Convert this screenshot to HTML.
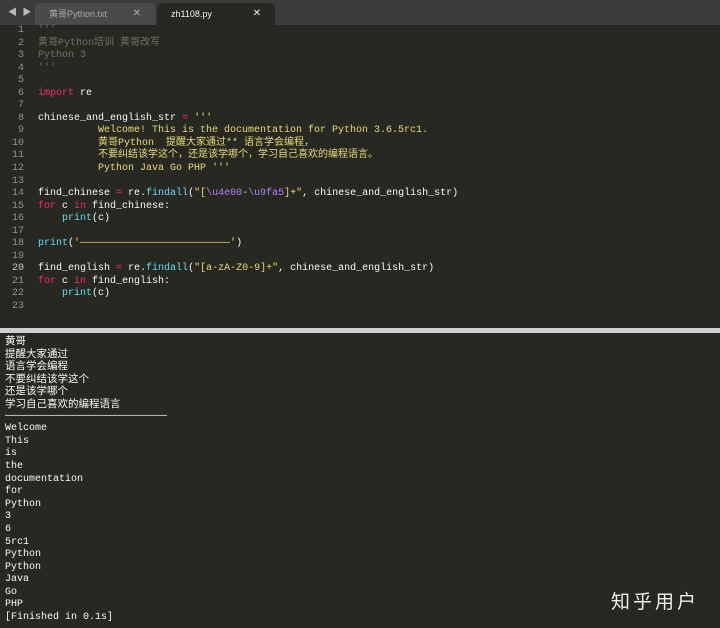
<!DOCTYPE html>
<html><head><meta charset="utf-8"><style>
*{margin:0;padding:0;box-sizing:border-box}
body{width:720px;height:628px;background:#272822;overflow:hidden;position:relative;font-family:"Liberation Mono","Noto Sans CJK SC",monospace}
.tabbar{position:absolute;left:0;top:0;width:720px;height:25px;background:#3b3b3b}
.tab{position:absolute;top:3px;height:22px;font:9px "Liberation Sans","Noto Sans CJK SC",sans-serif;line-height:22px;padding-left:14px}
.t1{left:35px;width:120px;background:#4a4a4a;color:#aaa;border-radius:5px 5px 0 0}
.t2{left:157px;width:118px;background:#272822;color:#eee;border-radius:5px 5px 0 0}
.x{position:absolute;right:14px;top:0;font-size:10px}
.arr{position:absolute;left:8px;top:5px;color:#bbb;font-size:9px}
.ed{position:absolute;left:0;top:25px;width:720px}
.ln{position:absolute;left:0;width:24px;text-align:right;color:#8f908a;font-size:10px}
.cd{position:absolute;left:38px;color:#f8f8f2;font-size:10px}
.l{height:12.55px;line-height:12.55px;white-space:pre;overflow:visible}
.k{color:#f92672}.s{color:#e6db74}.c{color:#75715e}.f{color:#66d9ef}.e{color:#ae81ff}
.sep{position:absolute;left:0;top:328px;width:720px;height:5px;background:#cfcfcf}
.out{position:absolute;left:5px;top:335px;color:#f8f8f2;font-size:10px}
.out .l{height:12.6px;line-height:12.6px}
.cj{font-family:"Noto Sans CJK SC",sans-serif;font-size:10.5px}
.wm{position:absolute;left:611px;top:588px;color:#eee;font:19px "Noto Sans CJK SC",sans-serif;letter-spacing:3px;line-height:26px}
</style></head><body>
<div class="tabbar"><span class="arr">◀ ▶</span>
<div class="tab t1">黄哥Python.txt<span class="x">✕</span></div>
<div class="tab t2">zh1108.py<span class="x">✕</span></div></div>
<div class="ed">
<div class="ln" style="top:0"><div class="l">1</div><div class="l">2</div><div class="l">3</div><div class="l">4</div><div class="l">5</div><div class="l">6</div><div class="l">7</div><div class="l">8</div><div class="l">9</div><div class="l">10</div><div class="l">11</div><div class="l">12</div><div class="l">13</div><div class="l">14</div><div class="l">15</div><div class="l">16</div><div class="l">17</div><div class="l">18</div><div class="l">19</div><div class="l" style="color:#ccc">20</div><div class="l">21</div><div class="l">22</div><div class="l">23</div></div>
<div class="cd" style="top:0"><div class="l c">'''</div><div class="l c">黄哥Python培训 黄哥改写</div><div class="l c">Python 3</div><div class="l c">'''</div><div class="l"> </div><div class="l"><span class="k">import</span> re</div><div class="l"> </div><div class="l">chinese_and_english_str <span class="k">=</span> <span class="s">'''</span></div><div class="l s">          Welcome! This is the documentation for Python 3.6.5rc1.</div><div class="l s">          黄哥Python  提醒大家通过** 语言学会编程，</div><div class="l s">          不要纠结该学这个，还是该学哪个，学习自己喜欢的编程语言。</div><div class="l s">          Python Java Go PHP '''</div><div class="l"> </div><div class="l">find_chinese <span class="k">=</span> re.<span class="f">findall</span>(<span class="s">"[<span class="e">\u4e00</span>-<span class="e">\u9fa5</span>]+"</span>, chinese_and_english_str)</div><div class="l"><span class="k">for</span> c <span class="k">in</span> find_chinese:</div><div class="l">    <span class="f">print</span>(c)</div><div class="l"> </div><div class="l"><span class="f">print</span>(<span class="s">'—————————————————————————'</span>)</div><div class="l"> </div><div class="l">find_english <span class="k">=</span> re.<span class="f">findall</span>(<span class="s">"[a-zA-Z0-9]+"</span>, chinese_and_english_str)</div><div class="l"><span class="k">for</span> c <span class="k">in</span> find_english:</div><div class="l">    <span class="f">print</span>(c)</div><div class="l"> </div></div></div>
<div class="sep"></div>
<div class="out"><div class="l cj">黄哥</div><div class="l cj">提醒大家通过</div><div class="l cj">语言学会编程</div><div class="l cj">不要纠结该学这个</div><div class="l cj">还是该学哪个</div><div class="l cj">学习自己喜欢的编程语言</div><div class="l">———————————————————————————</div><div class="l">Welcome</div><div class="l">This</div><div class="l">is</div><div class="l">the</div><div class="l">documentation</div><div class="l">for</div><div class="l">Python</div><div class="l">3</div><div class="l">6</div><div class="l">5rc1</div><div class="l">Python</div><div class="l">Python</div><div class="l">Java</div><div class="l">Go</div><div class="l">PHP</div><div class="l">[Finished in 0.1s]</div></div>
<div class="wm">知乎用户</div>
</body></html>
